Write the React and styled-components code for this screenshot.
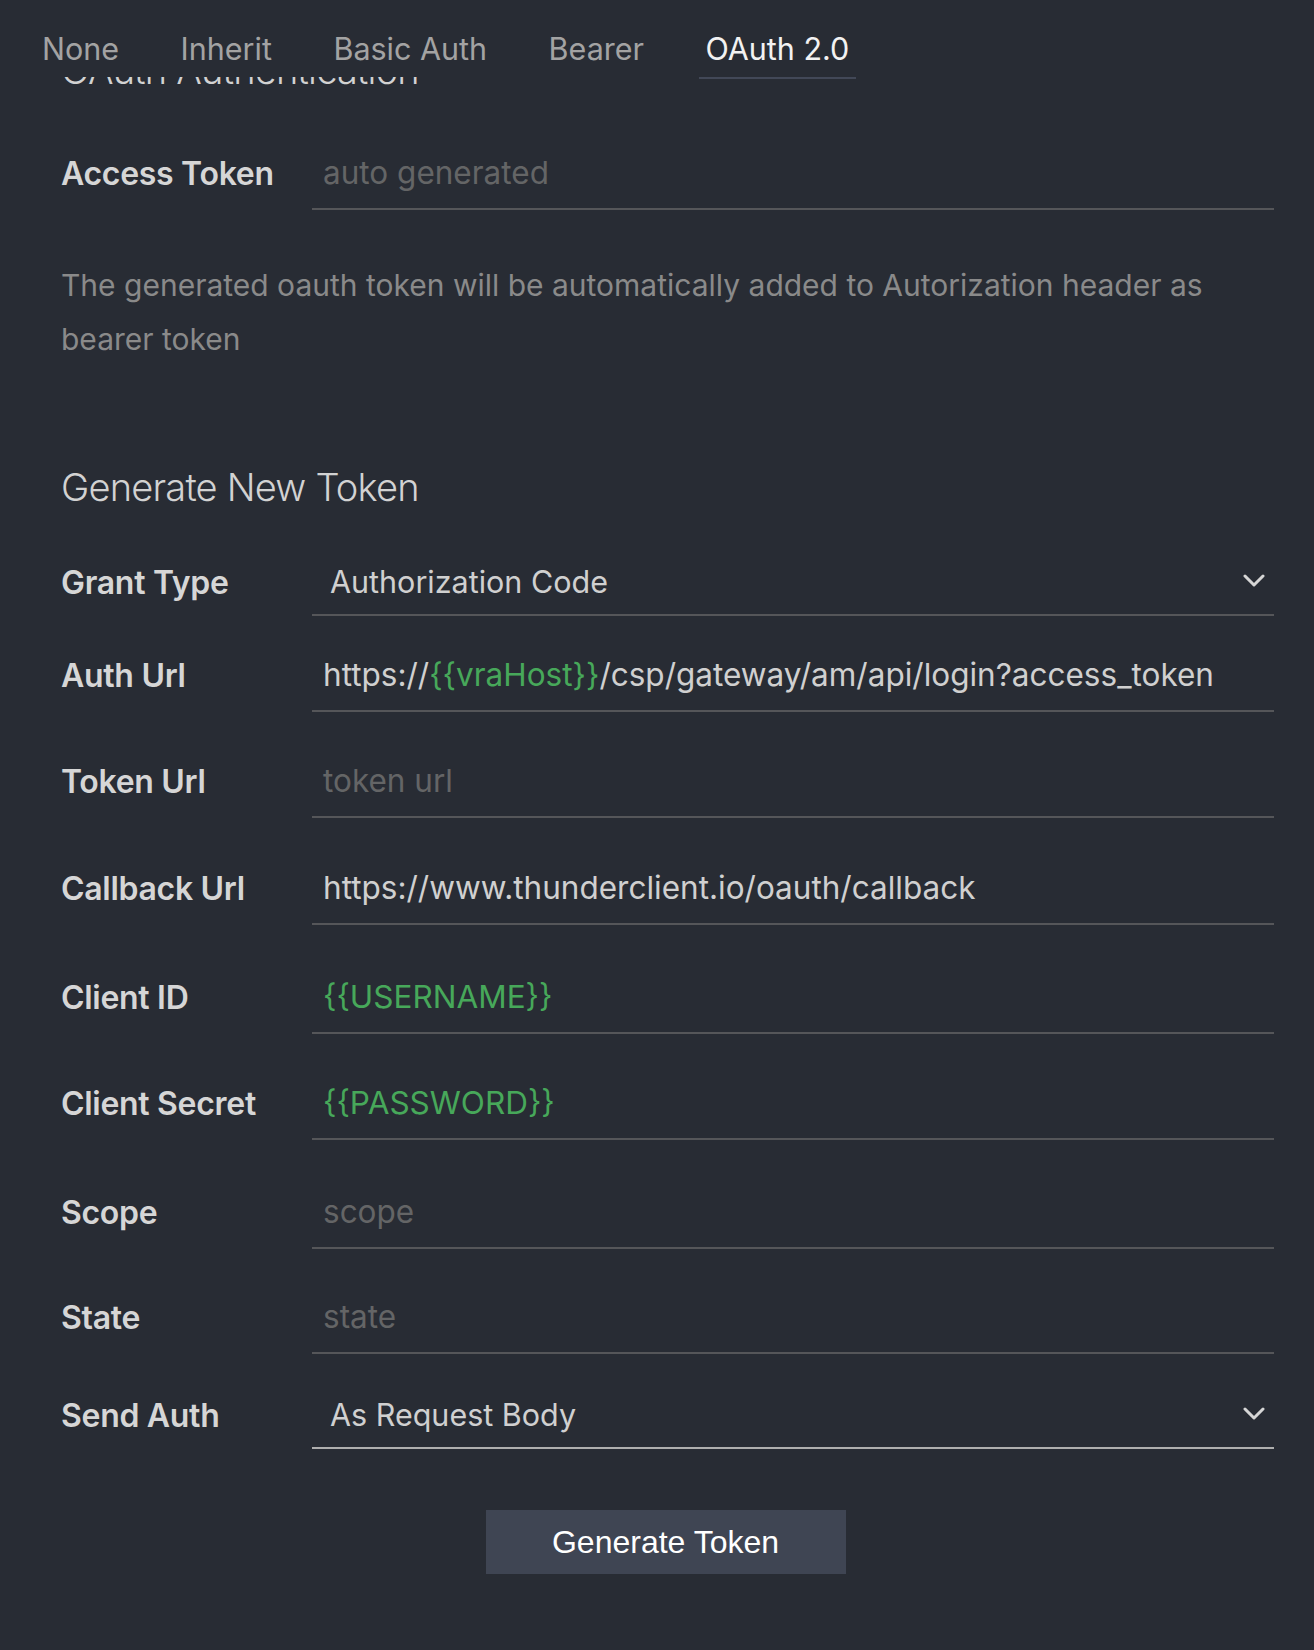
import React from 'react';
import styled, { createGlobalStyle } from 'styled-components';

const Global = createGlobalStyle`
  html, body { margin: 0; padding: 0; background: #282c34; }
  body {
    font-family: Inter, "Noto Sans", sans-serif;
    -webkit-font-smoothing: antialiased;
  }
  * { box-sizing: border-box; }
`;

const Page = styled.div`
  min-height: 1650px;
  background: #282c34;
`;

const TabBar = styled.nav`
  display: flex;
  gap: 47.5px;
  padding: 29px 0 0 35px;
`;

const Tab = styled.div`
  padding: 0 7px 8px;
  font-size: 30.5px;
  line-height: 40px;
  font-weight: 400;
  color: ${p => (p.$active ? '#f2f2f2' : '#a3a3a3')};
  border-bottom: 2px solid ${p => (p.$active ? '#424857' : 'transparent')};
  white-space: nowrap;
`;

const Content = styled.div`
  padding: 0 40px 0 61px;
  display: flex;
  flex-direction: column;
`;

const HeadingPeek = styled.div`
  margin-top: -2px;
  height: 13px;
  overflow: hidden;
  display: flex;
  align-items: flex-end;
`;

const SectionTitle = styled.h2`
  margin: ${p => p.$mt || 0}px 0 0;
  font-size: 38px;
  letter-spacing: -0.8px;
  line-height: ${p => (p.$peek ? 40 : 48)}px;
  font-weight: 300;
  color: #d2d2d2;
  flex-shrink: 0;
  white-space: nowrap;
`;

const Row = styled.div`
  display: flex;
  align-items: stretch;
  margin-top: ${p => p.$mt}px;
`;

const Label = styled.div`
  width: 251px;
  flex-shrink: 0;
  display: flex;
  align-items: center;
  font-size: 32px;
  font-weight: 600;
  letter-spacing: -0.3px;
  color: #d6d6d6;
`;

const Field = styled.div`
  flex: 1;
  height: ${p => p.$h || 74}px;
  display: flex;
  align-items: center;
  justify-content: space-between;
  padding: 0 ${p => p.$pr || 11}px 0 ${p => p.$pl || 11}px;
  border-bottom: 2px solid ${p => (p.$focus ? '#aeaeae' : '#555659')};
  font-size: ${p => p.$fs || 31.5}px;
  color: ${p => (p.$placeholder ? '#646566' : '#d0d0d0')};
  white-space: nowrap;
  overflow: hidden;
`;

const Var = styled.span`
  color: #47a85a;
`;

const Note = styled.p`
  margin: 48px 0 0;
  font-size: 30px;
  line-height: 54px;
  color: #8a8a8a;
`;

const ButtonRow = styled.div`
  display: flex;
  justify-content: center;
  margin-top: 61px;
  padding-right: 4px;
`;

const Button = styled.button`
  width: 360px;
  height: 64px;
  border: none;
  background: #3f4553;
  color: #ffffff;
  font-family: "Liberation Sans", Arial, sans-serif;
  font-size: 32px;
  cursor: pointer;
`;

const Chevron = () => (
  <svg width="22" height="14" viewBox="0 0 22 14" fill="none">
    <polyline points="2,2 11,11 20,2" stroke="#d6d6d6" strokeWidth="3" strokeLinecap="round" strokeLinejoin="round" />
  </svg>
);

const tabs = ['None', 'Inherit', 'Basic Auth', 'Bearer', 'OAuth 2.0'];

const InputRow = ({ label, mt, placeholder, children }) => (
  <Row $mt={mt}>
    <Label>{label}</Label>
    <Field $placeholder={!!placeholder}>
      <span>{placeholder || children}</span>
    </Field>
  </Row>
);

const SelectRow = ({ label, mt, value, focus }) => (
  <Row $mt={mt}>
    <Label>{label}</Label>
    <Field $h={68} $pl={18} $pr={9} $fs={30.5} $focus={focus}>
      <span>{value}</span>
      <Chevron />
    </Field>
  </Row>
);

export default function App() {
  return (
    <Page>
      <Global />
      <TabBar>
        {tabs.map(t => (
          <Tab key={t} $active={t === 'OAuth 2.0'}>{t}</Tab>
        ))}
      </TabBar>
      <Content>
        <HeadingPeek>
          <SectionTitle $peek>OAuth Authentication</SectionTitle>
        </HeadingPeek>
        <InputRow label="Access Token" mt={46} placeholder="auto generated" />
        <Note>
          The generated oauth token will be automatically added to Autorization header as bearer token
        </Note>
        <SectionTitle $mt={97}>Generate New Token</SectionTitle>
        <SelectRow label="Grant Type" mt={37} value="Authorization Code" />
        <InputRow label="Auth Url" mt={22}>
          https://<Var>{'{{vraHost}}'}</Var>/csp/gateway/am/api/login?access_token
        </InputRow>
        <InputRow label="Token Url" mt={32} placeholder="token url" />
        <InputRow label="Callback Url" mt={33}>
          https://www.thunderclient.io/oauth/callback
        </InputRow>
        <InputRow label="Client ID" mt={35}>
          <Var>{'{{USERNAME}}'}</Var>
        </InputRow>
        <InputRow label="Client Secret" mt={32}>
          <Var>{'{{PASSWORD}}'}</Var>
        </InputRow>
        <InputRow label="Scope" mt={35} placeholder="scope" />
        <InputRow label="State" mt={31} placeholder="state" />
        <SelectRow label="Send Auth" mt={27} value="As Request Body" focus />
        <ButtonRow>
          <Button>Generate Token</Button>
        </ButtonRow>
      </Content>
    </Page>
  );
}
